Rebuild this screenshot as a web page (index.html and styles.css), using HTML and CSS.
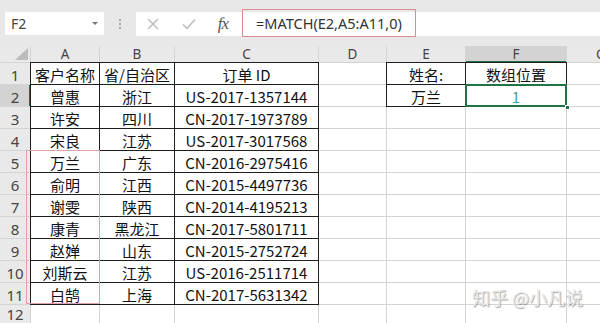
FILE: index.html
```html
<!DOCTYPE html>
<html lang="zh">
<head>
<meta charset="utf-8">
<link rel="stylesheet" href="styles.css">
</head>
<body>
<div class="app">
  <div class="fbar">
    <div class="namebox"><span class="ref">F2</span><span class="caret"></span></div>
    <div class="dots"><i></i><i></i><i></i></div>
    <div class="finput">
      <span class="ic ic-x"><svg width="12" height="12" viewBox="0 0 12 12"><path d="M1 1L11 11M11 1L1 11" stroke="#b9b9b9" stroke-width="1.4" fill="none"/></svg></span>
      <span class="ic ic-ok"><svg width="14" height="12" viewBox="0 0 14 12"><path d="M1 6.5L5 10.5L13 1.5" stroke="#b9b9b9" stroke-width="1.4" fill="none"/></svg></span>
      <span class="ic fx">fx</span>
      <div class="formula">=MATCH(E2,A5:A11,0)</div>
    </div>
  </div>
  <div class="sheet-wrap">
    <div class="sheet">
      <div class="h corner"><span class="tri"></span></div>
      <div class="h">A</div><div class="h">B</div><div class="h">C</div><div class="h">D</div><div class="h">E</div><div class="h hsel">F</div><div class="h">G</div>

      <div class="rh">1</div><div class="c b">客户名称</div><div class="c b">省/自治区</div><div class="c b">订单 ID</div><div class="c"></div><div class="c b">姓名:</div><div class="c b">数组位置</div><div class="c"></div>
      <div class="rh rsel">2</div><div class="c b">曾惠</div><div class="c b">浙江</div><div class="c b">US-2017-1357144</div><div class="c"></div><div class="c b">万兰</div><div class="c sel">1</div><div class="c"></div>
      <div class="rh">3</div><div class="c b">许安</div><div class="c b">四川</div><div class="c b">CN-2017-1973789</div><div class="c"></div><div class="c"></div><div class="c"></div><div class="c"></div>
      <div class="rh">4</div><div class="c b">宋良</div><div class="c b">江苏</div><div class="c b">US-2017-3017568</div><div class="c"></div><div class="c"></div><div class="c"></div><div class="c"></div>
      <div class="rh">5</div><div class="c b">万兰</div><div class="c b">广东</div><div class="c b">CN-2016-2975416</div><div class="c"></div><div class="c"></div><div class="c"></div><div class="c"></div>
      <div class="rh">6</div><div class="c b">俞明</div><div class="c b">江西</div><div class="c b">CN-2015-4497736</div><div class="c"></div><div class="c"></div><div class="c"></div><div class="c"></div>
      <div class="rh">7</div><div class="c b">谢雯</div><div class="c b">陕西</div><div class="c b">CN-2014-4195213</div><div class="c"></div><div class="c"></div><div class="c"></div><div class="c"></div>
      <div class="rh">8</div><div class="c b">康青</div><div class="c b">黑龙江</div><div class="c b">CN-2017-5801711</div><div class="c"></div><div class="c"></div><div class="c"></div><div class="c"></div>
      <div class="rh">9</div><div class="c b">赵婵</div><div class="c b">山东</div><div class="c b">CN-2015-2752724</div><div class="c"></div><div class="c"></div><div class="c"></div><div class="c"></div>
      <div class="rh">10</div><div class="c b">刘斯云</div><div class="c b">江苏</div><div class="c b">US-2016-2511714</div><div class="c"></div><div class="c"></div><div class="c"></div><div class="c"></div>
      <div class="rh">11</div><div class="c b">白鹄</div><div class="c b">上海</div><div class="c b">CN-2017-5631342</div><div class="c"></div><div class="c"></div><div class="c"></div><div class="c"></div>
      <div class="rh">12</div><div class="c"></div><div class="c"></div><div class="c"></div><div class="c"></div><div class="c"></div><div class="c"></div><div class="c"></div>
    </div>
    <div class="range-box"></div>
    <div class="watermark">知乎 @小凡说</div>
  </div>
</div>
</body>
</html>
```
FILE: styles.css
```css
html, body {
  margin: 0;
  padding: 0;
}
body {
  width: 600px;
  height: 323px;
  overflow: hidden;
  background: #e8e8e8;
  font-family: "Noto Sans CJK SC", "Noto Sans", sans-serif;
}
.app {
  width: 600px;
}
.fbar {
  box-sizing: border-box;
  height: 46px;
  padding-top: 12px;
  display: flex;
  align-items: flex-start;
  background: #e8e8e8;
}
.namebox {
  margin-left: 5px;
  width: 99px;
  height: 23px;
  background: #fff;
  display: flex;
  align-items: center;
  justify-content: space-between;
  box-sizing: border-box;
  padding: 0 6px 0 6px;
}
.ref {
  font-family: "Noto Sans", sans-serif;
  font-size: 14px;
  color: #444;
}
.caret {
  width: 0;
  height: 0;
  border-left: 3px solid transparent;
  border-right: 3px solid transparent;
  border-top: 3px solid #777;
}
.dots {
  width: 32px;
  height: 24px;
  display: flex;
  flex-direction: column;
  align-items: center;
  justify-content: center;
  gap: 2px;
}
.dots i {
  width: 2px;
  height: 2px;
  background: #aaa;
  display: block;
}
.finput {
  flex: 1;
  height: 24px;
  background: #fff;
  display: flex;
  align-items: center;
}
.ic {
  width: 32px;
  height: 24px;
  display: flex;
  align-items: center;
  justify-content: center;
}
.ic-x {
  margin-left: 1px;
}
.ic-ok {
  margin-left: 4px;
}
.fx {
  margin-left: 2px;
  font-family: "Liberation Serif", serif;
  font-style: italic;
  font-size: 17px;
  color: #555;
  letter-spacing: -1px;
}
.formula {
  margin: -3px 0 -1px 3px;
  width: 174px;
  height: 28px;
  box-sizing: border-box;
  border: 1px solid #dc8b91;
  padding-left: 13px;
  display: flex;
  align-items: center;
  font-family: "Noto Sans", sans-serif;
  font-size: 14.5px;
  color: #333;
}
.sheet-wrap {
  position: relative;
  width: 600px;
  overflow: hidden;
}
.sheet {
  display: grid;
  width: 635px;
  grid-template-columns: 30px 68px 74px 143px 67px 78px 100px 68px;
  grid-template-rows: 16px repeat(11, 21px) 18px;
  gap: 1px;
  background: #d4d4d4;
}
.h {
  background: #e9e9e9;
  display: flex;
  align-items: center;
  justify-content: center;
  font-family: "Noto Sans", sans-serif;
  font-size: 13.5px;
  color: #444;
  line-height: 16px;
}
.corner {
  justify-content: flex-end;
  align-items: flex-end;
}
.tri {
  width: 0;
  height: 0;
  margin: 0 2px 2px 0;
  border-left: 13px solid transparent;
  border-bottom: 12px solid #bcbcbc;
}
.hsel {
  background: #d3d3d3;
  box-shadow: inset 0 -1px 0 #217346;
}
.rh {
  background: #e9e9e9;
  display: flex;
  align-items: flex-end;
  justify-content: center;
  font-family: "Noto Sans", sans-serif;
  font-size: 15px;
  line-height: 18px;
  color: #444;
}
.rsel {
  background: #d3d3d3;
  box-shadow: inset -1px 0 0 #217346;
}
.c {
  background: #fff;
  display: flex;
  align-items: center;
  justify-content: center;
  padding-top: 2px;
  box-sizing: border-box;
  font-size: 15px;
  color: #111;
  white-space: nowrap;
}
.b {
  box-shadow: 0 0 0 1px #1e1e1e;
}
.sel {
  position: relative;
  z-index: 2;
  color: #4a9f98;
  box-shadow: 0 0 0 1px #217346, inset 0 0 0 1px #217346;
}
.sel::after {
  content: "";
  position: absolute;
  right: -4px;
  bottom: -4px;
  width: 5px;
  height: 5px;
  background: #217346;
  border: 1px solid #fff;
  box-sizing: border-box;
}
.range-box {
  position: absolute;
  left: 26px;
  top: 104px;
  width: 74px;
  height: 154px;
  box-sizing: border-box;
  border: 1px solid #dfa0aa;
  pointer-events: none;
}
.watermark {
  position: absolute;
  left: 472px;
  top: 241px;
  font-size: 18px;
  line-height: 20px;
  color: #e9e9e9;
  text-shadow: 1px 1px 1px rgba(0, 0, 0, 0.35);
  white-space: nowrap;
}
```
